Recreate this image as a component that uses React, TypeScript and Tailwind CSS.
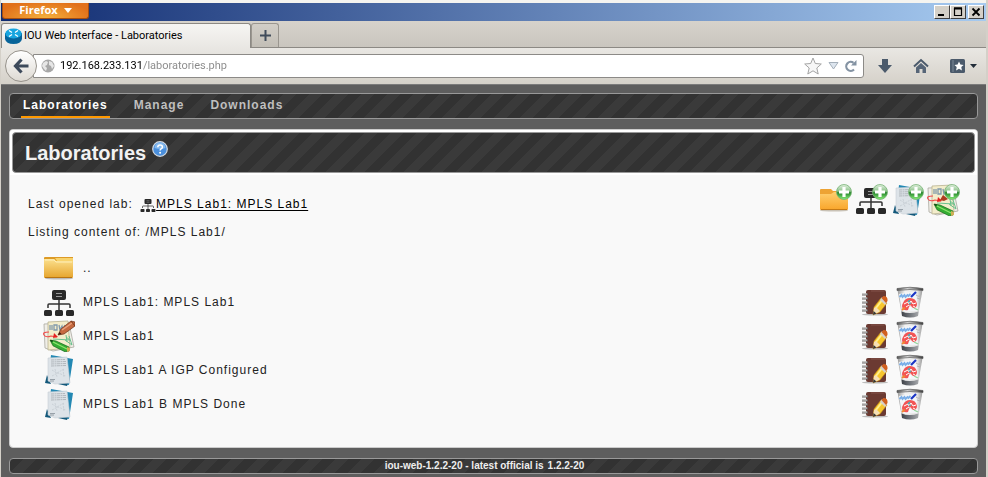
import type { ReactNode } from "react";

const STRIPES =
  "bg-[#333333] bg-[linear-gradient(135deg,#323232_25%,#3a3a3a_25%,#3a3a3a_50%,#323232_50%,#323232_75%,#3a3a3a_75%)] bg-[length:26px_26px]";

function FolderIcon() {
  return (
    <svg viewBox="0 0 32 32" className="block size-8" aria-hidden>
      <defs>
        <linearGradient id="folder" x1="0" y1="0" x2="0" y2="1">
          <stop offset="0" stopColor="#fbe08e" />
          <stop offset="1" stopColor="#e6a42c" />
        </linearGradient>
      </defs>
      <ellipse cx="16" cy="26.5" rx="14" ry="1" fill="#bbb" />
      <path d="M1 6q0-1 1-1h28v20H1z" fill="#dd9a26" />
      <path d="M12 6h18v3H14z" fill="#f8d36c" />
      <path d="M1 7h10q1 0 2 2h17v16q0 1-1 1H2q-1 0-1-1z" fill="url(#folder)" />
      <path d="M2 8h9l2 2h16" fill="none" stroke="#fff0b8" strokeWidth="1" />
      <path d="M2 25.5h27" stroke="#b97512" />
    </svg>
  );
}

function OrangeFolderIcon() {
  return (
    <svg viewBox="0 0 32 32" className="block size-8" aria-hidden>
      <defs>
        <linearGradient id="orange-folder" x1="0" y1="0" x2="0" y2="1">
          <stop offset="0" stopColor="#ffcf70" />
          <stop offset="1" stopColor="#f9a52a" />
        </linearGradient>
      </defs>
      <ellipse cx="15" cy="26.5" rx="14" ry="1" fill="#c9c2b6" />
      <path d="M1 6q0-1 1-1h10l2 2h15v18H1z" fill="#eda334" />
      <path d="M1 10h11l3-2h14v17q0 1-1 1H2q-1 0-1-1z" fill="url(#orange-folder)" />
      <path d="M2 25.500h26" stroke="#c67a15" />
    </svg>
  );
}

function LabIcon({ className = "size-8" }: { className?: string }) {
  return (
    <svg viewBox="0 0 32 32" className={className} aria-hidden>
      <rect x="9" y="4" width="14" height="10" rx="2" fill="#292929" />
      <path d="M13 7.5h6M13 10.5h6" stroke="#999" />
      <path d="M16 14v10M5 22v-3q0-1 1-1h20q1 0 1 1v3" fill="none" stroke="#333" strokeWidth="1.5" />
      <rect x="1" y="24" width="8" height="6" rx="1.5" fill="#292929" />
      <rect x="12" y="24" width="8" height="6" rx="1.5" fill="#292929" />
      <rect x="23" y="24" width="8" height="6" rx="1.5" fill="#292929" />
    </svg>
  );
}

function ConfigIcon() {
  return (
    <svg viewBox="0 0 32 32" className="block size-8" aria-hidden>
      <path d="M8 1l22 4-4 26-21-4z" fill="#2388b3" />
      <path d="M4 21l-2 8 6 1zM27 24l-3 8-9-2z" fill="#14597b" />
      <path d="M5 4l19-1 3 26-15 1-7-3z" fill="#dde3e8" stroke="#c6ced5" strokeWidth=".6" />
      <path d="M8 6l14-.5M8 8l15-.5M8 10l15-.5M8 12l15-.5" stroke="#b2b8bd" strokeWidth="1" strokeDasharray="3 .5 2 .5" />
      <path d="M9 16l5 3 7-4M9 22l6-3 8 3M12 15l2 8M20 15l1 8" fill="none" stroke="#c4cbd2" strokeWidth=".8" strokeDasharray="2 1" />
      <path d="M7 25.500h5M7 27h4" fill="none" stroke="#879198" strokeWidth=".8" />
    </svg>
  );
}

function DiagramIcon({ plain = false }: { plain?: boolean }) {
  return (
    <svg viewBox="0 0 32 32" className="block size-8" aria-hidden>
      <path d="M1 4l25-1 5 24-21 4-8-3z" fill="#f0eee8" stroke="#aaa89f" strokeWidth=".8" />
      <path d="M5 2l20-1 2 27-22 2z" fill="#f3edcb" stroke="#b9b391" strokeWidth=".8" />
      <path d="M7 5v5M9 5v5M11 5h3v5h-3zM16 5l1 5 2-4 1 4 2-5" fill="none" stroke="#8199ab" strokeWidth="1.300" />
      <path d="M6 12q-7 0-5 3t7 1l6 1" fill="none" stroke="#f24a4a" strokeWidth="1.100" />
      <path d="M11 13l4 4-5 1z" fill="#e62222" />
      <path d="M10 19l17 1-4-3M22 20l7 5-3-9M24 22l-1-7" fill="none" stroke="#6bc18e" strokeWidth="1" />
      {!plain && (
        <>
          <path d="M15 15l3-6L28 1l4 1v4L21 14z" fill="#c76a41" stroke="#6d3018" strokeWidth=".7" />
          <path d="M19 10L29 3" fill="none" stroke="#eaa27c" strokeWidth="1.500" />
          <path d="M28 1l4 5" stroke="#7d3c1f" />
          <path d="M15 15l1.500-3 2 2z" fill="#3d1b0d" />
        </>
      )}
      {plain && <path d="M13 16l3-5 5 4-4 2z" fill="#ad3b20" />}
      <path d="M7 20l6 1 13 6v4l-4 .8-12-6z" fill="#35ad33" stroke="#14671b" strokeWidth=".7" />
      <path d="M10 22l14 7" stroke="#8fe66f" strokeWidth="1.200" />
      <path d="M24 27l3 1v3l-3 1z" fill="#cfae57" />
      <path d="M7 20l3 .5-1 2z" fill="#10400f" />
    </svg>
  );
}

function NotebookIcon() {
  return (
    <svg viewBox="0 0 32 32" className="block size-8" aria-hidden>
      <ellipse cx="16" cy="28.500" rx="13" ry="1" fill="#bbb" />
      <rect x="7" y="4" width="20" height="24" rx="2" fill="#6b3a32" />
      <path d="M12 5h13" stroke="#84524a" />
      <path d="M3 8.500h6M3 12.500h6M3 16.500h6M3 20.500h6M3 24.500h6" stroke="#6c6664" strokeWidth="2.200" />
      <path d="M3 8h5M3 12h5M3 16h5M3 20h5M3 24h5" stroke="#ddd" strokeWidth="1" />
      <path d="M14 29l1-8 7-9 6 5-7 9z" fill="#f7c62e" stroke="#bf8516" strokeWidth=".6" />
      <path d="M17 22l7-9" stroke="#fff08a" strokeWidth="2" />
      <path d="M15 22l2-1 4 4-1 1-6 3z" fill="#f5dfb5" />
      <path d="M14 29l.5-4 3 2.500z" fill="#333" />
      <path d="M21 14l2-3 5 5-2 3z" fill="#d7d0c8" />
      <path d="M22.500 12l2-2q4.500 0 4 5l-1.500 2z" fill="#d2601f" />
    </svg>
  );
}

function TrashIcon() {
  return (
    <svg viewBox="0 0 32 32" className="block size-8" aria-hidden>
      <defs>
        <linearGradient id="can" x1="0" y1="0" x2="1" y2="0">
          <stop offset="0" stopColor="#9b9b9b" />
          <stop offset=".3" stopColor="#f4f4f4" />
          <stop offset=".8" stopColor="#e2e2e2" />
          <stop offset="1" stopColor="#999999" />
        </linearGradient>
        <linearGradient id="can-base" x1="0" y1="0" x2="1" y2="0">
          <stop offset="0" stopColor="#3e4248" />
          <stop offset=".5" stopColor="#71757b" />
          <stop offset="1" stopColor="#a5a7aa" />
        </linearGradient>
        <linearGradient id="rim" x1="0" y1="0" x2="1" y2="0">
          <stop offset="0" stopColor="#555555" />
          <stop offset=".4" stopColor="#d0d0d0" />
          <stop offset="1" stopColor="#3c3c3c" />
        </linearGradient>
      </defs>
      <path d="M3.500 4h25L24 30q-8 3-16 0z" fill="url(#can)" />
      <path d="M5 8l17-3 2 20H8z" fill="#f3f5f8" />
      <path d="M5.500 11l2-2 1 2 2-2 1 2 2-2 1 1 2-2" fill="none" stroke="#79aee8" strokeWidth="1.800" />
      <path d="M17 11l5-5" stroke="#1b35c4" strokeWidth="2.200" />
      <path d="M9 17q2-5 7-5 6 0 7 6 0 4-4 4l-2-2-2 1-1 3q-3 1-5-1-2-3 0-6z" fill="#f25555" />
      <path d="M10 18l4-2 1 2 2-3 2 3 3-1M16 24v-5M12 21l3-2M19 20l2 1" fill="none" stroke="#fff" strokeWidth="1" />
      <path d="M14 16l2-2M15 18l2-1" stroke="#35bcc8" strokeWidth="1.300" />
      <path d="M8 24l3-2.500" stroke="#ef8732" strokeWidth="2" />
      <path d="M20 22l4 2" stroke="#93d49a" strokeWidth="1.300" />
      <path d="M22 9q4 3 5-1M23 12l3 1" fill="none" stroke="#b4b4b4" />
      <path d="M7.500 25.500q8 3 17 0L24 30q-8 3-16 0z" fill="url(#can-base)" />
      <path d="M3 2.500q13-2.500 26 0v2q-13-2-26 0z" fill="url(#rim)" stroke="#5c5c5c" strokeWidth=".7" />
    </svg>
  );
}

function PlusBadge() {
  return (
    <svg viewBox="0 0 16 16" className="absolute top-0 -right-px size-4" aria-hidden>
      <defs>
        <linearGradient id="plus" x1="0" y1="0" x2="0" y2="1">
          <stop offset="0" stopColor="#e3f1e1" />
          <stop offset=".45" stopColor="#8cc289" />
          <stop offset=".55" stopColor="#238329" />
          <stop offset="1" stopColor="#8bf07a" />
        </linearGradient>
      </defs>
      <circle cx="8" cy="8" r="7.500" fill="url(#plus)" stroke="#76b274" strokeWidth=".8" />
      <path d="M8 3v10M3 8h10" stroke="#fff" strokeWidth="3.200" />
    </svg>
  );
}

function WindowButton({ label, children }: { label: string; children: ReactNode }) {
  return (
    <button
      aria-label={label}
      className="flex h-3.5 w-4 items-center justify-center border border-t-white border-r-[#404040] border-b-[#404040] border-l-white bg-[#d4d0c8]"
    >
      <svg viewBox="0 0 12 10" className="h-2.5 w-3" fill="none" stroke="#000" aria-hidden>
        {children}
      </svg>
    </button>
  );
}

function BrowserChrome() {
  return (
    <header className="font-[Roboto,sans-serif] text-[11px]">
      <div className="mt-[3px] flex h-[18px] items-start justify-between bg-[linear-gradient(90deg,#0f2a70,#a6caf0)] pr-[2px]">
        <button className="ml-px flex h-4 w-[87px] items-center justify-center gap-[6px] rounded-b-[3px] border border-t-0 border-[#a8500f] bg-[radial-gradient(ellipse_at_bottom,#f5b03c,#e1701a_80%)] font-['Open_Sans',sans-serif] text-[11px] font-bold text-white">
          Firefox
          <svg viewBox="0 0 8 5" className="h-[5px] w-2" aria-hidden>
            <path d="M0 0h8L4 5z" fill="#fff" />
          </svg>
        </button>
        <div className="flex pt-[2px]">
          <WindowButton label="Minimize">
            <path d="M2 8h6" strokeWidth="2" />
          </WindowButton>
          <WindowButton label="Maximize">
            <path d="M2 1h8M2.500 1v8M9.500 1v8M2 8.500h8" strokeWidth="1.200" />
            <path d="M2 1.500h8" strokeWidth="2" />
          </WindowButton>
          <div className="ml-[2px] flex">
            <WindowButton label="Close">
              <path d="M2.500 1.500l7 7M9.500 1.500l-7 7" strokeWidth="1.800" />
            </WindowButton>
          </div>
        </div>
      </div>

      <div className="flex h-[27px] items-end border-b border-[#8c8984] bg-[linear-gradient(#d6d2cb,#c9c5be)]">
        <div className="-mb-px flex h-[25px] w-[250px] items-center gap-[2px] rounded-t-[3px] border border-b-0 border-[#8c8984] bg-[linear-gradient(#f6f5f3,#e9e7e3)] pl-[3px] text-black">
          <svg viewBox="0 0 17 17" className="size-[17px]" aria-hidden>
            <path d="M0 5v6q1 5 8.500 5T17 11V5z" fill="#08649a" />
            <ellipse cx="8.500" cy="5.500" rx="8.200" ry="5" fill="#18a5df" />
            <path d="M4 2.500l3 2M13 2.500l-3 2M4 8.500l3-2M13 8.500l-3-2" stroke="#fff" strokeWidth="1.300" />
          </svg>
          <span className="pt-px">IOU Web Interface - Laboratories</span>
        </div>
        <button
          aria-label="New tab"
          className="flex h-6 w-7 items-center justify-center rounded-t-[3px] border border-b-0 border-[#9a968f] bg-[linear-gradient(#d2cec7,#c2beb6)]"
        >
          <svg viewBox="0 0 11 11" className="size-[11px]" aria-hidden>
            <path d="M5.500 0v11M0 5.500h11" stroke="#414c5b" strokeWidth="2" />
          </svg>
        </button>
      </div>

      <div className="flex h-9 items-center bg-[linear-gradient(#e9e7e3,#d5d1c9)] pr-[9px] pl-1">
        <button
          aria-label="Back"
          className="z-10 flex size-8 shrink-0 items-center justify-center rounded-full border border-[#97938c] bg-[linear-gradient(#ffffff,#dedad3)]"
        >
          <svg viewBox="0 0 16 16" className="size-4" fill="none" stroke="#3d4a5b" strokeWidth="3.200" aria-hidden>
            <path d="M8.500 1.500L2.500 8l6 6.500M3 8h12.500" />
          </svg>
        </button>
        <div className="-ml-1 flex h-6 min-w-0 flex-1 items-center rounded-r-[3px] border border-[#8c8a87] bg-white pr-[5px] pl-[7px]">
          <svg viewBox="0 0 14 14" className="size-3.5 shrink-0" aria-hidden>
            <circle cx="7" cy="7" r="6.500" fill="#a7a7a7" />
            <path d="M2 4l3-2 2 1-1 3-2 1 2 2-1 3-2-2-2-3zM8 2l3 1 2 4-2 3-1-3-2-1z" fill="#e6e6e6" />
          </svg>
          <input
            aria-label="Address"
            defaultValue="192.168.233.131/laboratories.php"
            className="ml-[5px] min-w-0 flex-1 bg-[linear-gradient(90deg,#000_83px,#888_83px)] bg-clip-text pt-px text-[11px] text-transparent outline-none"
          />
          <button aria-label="Bookmark this page">
            <svg viewBox="0 0 18 18" className="size-[18px]" aria-hidden>
              <path d="M9 1l2.300 5.500 6 .5-4.500 4 1.400 6L9 13.800 3.800 17l1.400-6L.7 7l6-.5z" fill="#f7f7f7" stroke="#a4a4a4" />
            </svg>
          </button>
          <button aria-label="Show history" className="ml-[6px]">
            <svg viewBox="0 0 11 8" className="h-2 w-[11px]" aria-hidden>
              <path d="M1 .5h9L5.500 7z" fill="#dde5ee" stroke="#a4afba" />
            </svg>
          </button>
          <button aria-label="Reload" className="ml-[5px]">
            <svg viewBox="0 0 14 14" className="size-3.5" aria-hidden>
              <path d="M10 10.500A4.500 4.500 0 1 1 9.500 3.800" fill="none" stroke="#8493a3" strokeWidth="2.200" />
              <path d="M7 6.500h5.500V1z" fill="#8493a3" />
            </svg>
          </button>
        </div>
        <button aria-label="Downloads" className="ml-[13px]">
          <svg viewBox="0 0 16 16" className="size-4" aria-hidden>
            <path d="M5 1h6v6h4l-7 8-7-8h4z" fill="#4b5a6b" />
          </svg>
        </button>
        <button aria-label="Home" className="ml-5">
          <svg viewBox="0 0 16 16" className="size-4" aria-hidden>
            <path d="M1 8.500L8 2l7 6.500" fill="none" stroke="#4b5a6b" strokeWidth="2" />
            <path d="M3 9.500L8 5l5 4.500V15H9.500v-4h-3v4H3z" fill="#566577" />
          </svg>
        </button>
        <button aria-label="Bookmarks" className="ml-5 flex items-center gap-1">
          <svg viewBox="0 0 17 16" className="h-4 w-[17px]" aria-hidden>
            <rect x="1" y="1" width="15" height="14" rx="1.500" fill="#4b5a6b" />
            <path d="M4 2v12" stroke="#7d8998" />
            <path d="M10 3.500l1.400 3 3.200.4-2.300 2.200.6 3.400L10 10.800l-2.900 1.700.6-3.400-2.300-2.200 3.200-.4z" fill="#fff" />
          </svg>
          <svg viewBox="0 0 7 4" className="h-1 w-[7px]" aria-hidden>
            <path d="M0 0h7L3.500 4z" fill="#222d38" />
          </svg>
        </button>
      </div>
    </header>
  );
}

const ACTIONS = [
  { label: "Add folder", icon: <OrangeFolderIcon /> },
  { label: "Add lab", icon: <LabIcon /> },
  { label: "Add config", icon: <ConfigIcon /> },
  { label: "Add diagram", icon: <DiagramIcon plain /> },
];

const ROWS = [
  { name: "..", icon: <FolderIcon />, editable: false },
  { name: "MPLS Lab1: MPLS Lab1", icon: <LabIcon />, editable: true },
  { name: "MPLS Lab1", icon: <DiagramIcon />, editable: true },
  { name: "MPLS Lab1 A IGP Configured", icon: <ConfigIcon />, editable: true },
  { name: "MPLS Lab1 B MPLS Done", icon: <ConfigIcon />, editable: true },
];

export default function App() {
  return (
    <div className="flex min-h-screen flex-col border-r-2 border-l border-[#d4d0c8] bg-[#f5f4f0]">
      <BrowserChrome />

      <div className="flex-1 border-t border-[#7b7b7b] bg-[#5e5e5e] px-2 pt-2 pb-1 font-['Liberation_Sans',Arial,sans-serif] text-xs">
        <nav className={`flex h-[26px] gap-[22px] rounded-[4px] border border-[#999999] pl-[11px] font-bold tracking-[1px] text-[#bfbfbf] ${STRIPES}`}>
          <a href="#laboratories" className="border-b-2 border-[#ff9900] px-[2px] leading-[22px] text-white">
            Laboratories
          </a>
          <a href="#manage" className="px-[2px] leading-[22px]">Manage</a>
          <a href="#downloads" className="px-[2px] leading-[22px]">Downloads</a>
        </nav>

        <main className="mt-[10px] rounded-[4px] border border-[#cccccc] bg-[#f9f9f9] pb-[26px] text-[#222222]">
          <div className="rounded-t-[3px] bg-white p-[2px]">
            <div className={`flex h-[41px] items-center gap-[6px] rounded-[4px] border border-[#999999] pl-3 ${STRIPES}`}>
              <h1 className="pt-px text-xl font-bold text-[#f2f2f2]">Laboratories</h1>
              <a href="#help" aria-label="Help" className="pb-2">
                <svg viewBox="0 0 16 16" className="size-4" aria-hidden>
                  <circle cx="8" cy="8" r="7.300" fill="#4a8fdc" stroke="#d3d9e0" strokeWidth="1.200" />
                  <path d="M2.500 7a5.500 5.500 0 0 1 11 0q-5 2-11 0z" fill="#85b9ee" />
                  <path d="M5.800 6.200q0-2.200 2.300-2.200t2.300 2q0 1.200-1.300 1.900-1 .6-1 1.600" fill="none" stroke="#fff" strokeWidth="1.500" />
                  <circle cx="8.100" cy="11.800" r="1" fill="#fff" />
                </svg>
              </a>
            </div>
          </div>

          <div className="flex justify-between pt-[9px] pr-[18px] pl-[18px]">
            <div className="pt-[6px] leading-7 tracking-[1px]">
              <p>
                Last opened lab:{" "}
                <a href="#last-lab" className="ml-[3px] text-black">
                  <LabIcon className="inline size-4" />
                  <span className="underline underline-offset-2">MPLS Lab1: MPLS Lab1</span>
                </a>
              </p>
              <p>Listing content of: /MPLS Lab1/</p>
            </div>
            <div className="flex h-8 gap-1">
              {ACTIONS.map(({ label, icon }) => (
                <button key={label} aria-label={label} className="relative size-8">
                  {icon}
                  <PlusBadge />
                </button>
              ))}
            </div>
          </div>

          <div className="mt-[5px] pr-[51px] pl-[33px]">
            <table className="w-full tracking-[1px]">
              <tbody>
                {ROWS.map(({ name, icon, editable }) => (
                  <tr key={name} className="h-[34px]">
                    <td className="w-10 p-0">{icon}</td>
                    <td className="p-0">{name}</td>
                    <td className="p-0">
                      {editable && (
                        <div className="flex justify-end gap-[3px]">
                          <button aria-label={`Edit ${name}`}>
                            <NotebookIcon />
                          </button>
                          <button aria-label={`Delete ${name}`}>
                            <TrashIcon />
                          </button>
                        </div>
                      )}
                    </td>
                  </tr>
                ))}
              </tbody>
            </table>
          </div>
        </main>

        <footer className={`mt-[10px] flex h-4 items-center justify-center gap-1 rounded-[4px] border border-[#999999] pr-[18px] text-[10px] leading-none font-bold text-[#eeeeee] ${STRIPES}`}>
          <span>iou-web-1.2.2-20 - latest official is</span>
          <span>1.2.2-20</span>
        </footer>
      </div>
    </div>
  );
}
